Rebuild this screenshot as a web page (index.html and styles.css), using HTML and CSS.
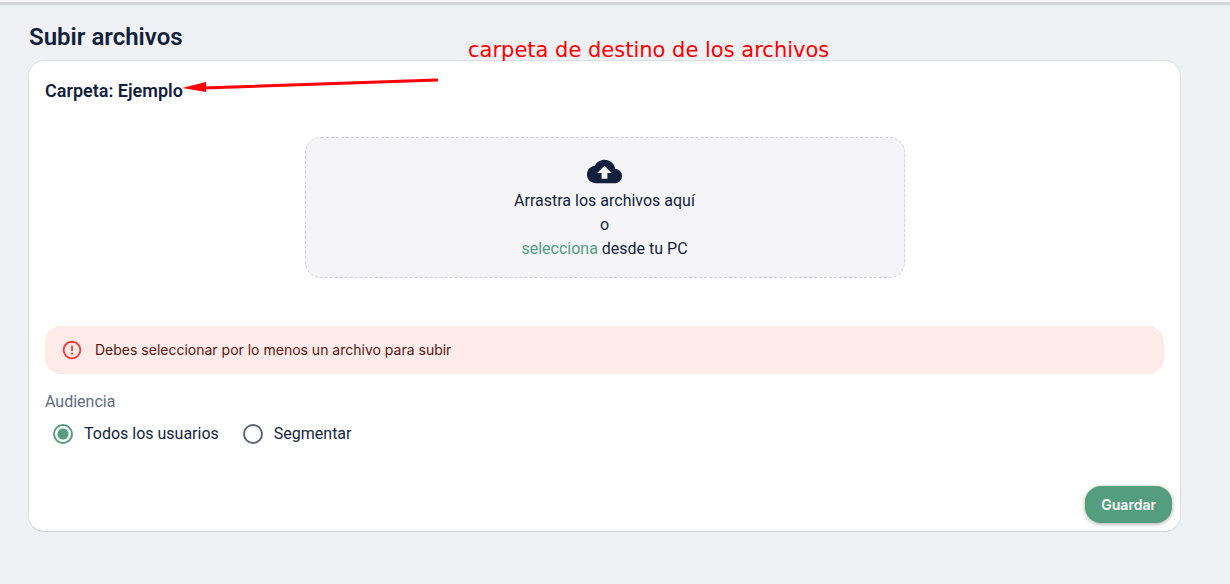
FILE: index.html
```html
<!DOCTYPE html>
<html lang="es">
<head>
    <meta charset="UTF-8">
    <meta name="viewport" content="width=device-width, initial-scale=1.0">
    <title>Subir archivos</title>
    <link rel="stylesheet" href="styles.css">
</head>
<body>
    <div class="topbar"></div>
    <main class="page">
        <h1>Subir archivos</h1>
        <form class="card">
            <h2>Carpeta: Ejemplo</h2>

            <div class="dropzone">
                <svg class="cloud" viewBox="0 0 24 24" aria-hidden="true">
                    <path d="M19.35 10.04C18.67 6.59 15.64 4 12 4 9.11 4 6.6 5.64 5.35 8.04 2.34 8.36 0 10.91 0 14c0 3.31 2.69 6 6 6h13c2.76 0 5-2.24 5-5 0-2.64-2.05-4.78-4.65-4.96zM14 13v4h-4v-4H7l5-5 5 5h-3z"/>
                </svg>
                <span>Arrastra los archivos aquí</span>
                <span>o</span>
                <span><a href="#">selecciona</a> desde tu PC</span>
            </div>

            <div class="alert" role="alert">
                <svg viewBox="0 0 24 24" aria-hidden="true">
                    <path d="M11 15h2v2h-2zm0-8h2v6h-2zm.99-5C6.47 2 2 6.48 2 12s4.47 10 9.99 10C17.52 22 22 17.52 22 12S17.52 2 11.99 2zM12 20c-4.42 0-8-3.58-8-8s3.58-8 8-8 8 3.58 8 8-3.58 8-8 8z"/>
                </svg>
                <span>Debes seleccionar por lo menos un archivo para subir</span>
            </div>

            <fieldset class="audience">
                <legend>Audiencia</legend>
                <div class="options">
                    <label><input type="radio" name="audiencia" value="todos" checked>Todos los usuarios</label>
                    <label><input type="radio" name="audiencia" value="segmentar">Segmentar</label>
                </div>
            </fieldset>

            <div class="actions">
                <button type="submit">Guardar</button>
            </div>
        </form>

        <!-- nota sobre la carpeta -->
        <p class="note">carpeta de destino de los archivos</p>
        <svg class="arrow" viewBox="0 0 256 20" aria-hidden="true">
            <path class="line" d="M22 12 L255 4"/>
            <path class="head" d="M0 12 L24 6 V16 Z"/>
        </svg>
    </main>
</body>
</html>
```

FILE: styles.css
```css
* {
    box-sizing: border-box;
}
body {
    margin: 0;
    font-family: Roboto, "Liberation Sans", sans-serif;
    font-size: 16px;
    line-height: 24px;
    color: #121f3d;
    background-color: #f0f1f5;
}
.topbar {
    height: 5px;
    background-color: #f7f7f7;
    border-bottom: 3px solid #d6d6d6;
}
.page {
    position: relative;
    padding: 16px 49px 48px 28px;
}
h1 {
    margin: 0 0 7px 1px;
    font-size: 24px;
    font-weight: 600;
    line-height: 32px;
}
.card {
    padding: 16px;
    background-color: #fff;
    border: 1px solid #dcdee3;
    border-bottom-color: #cfd1d5;
    border-radius: 16px;
}
h2 {
    margin: 0;
    font-size: 18px;
    font-weight: 600;
    line-height: 28px;
}
.dropzone {
    display: flex;
    flex-direction: column;
    align-items: center;
    width: 100%;
    max-width: 600px;
    margin: 32px auto 48px;
    padding: 16px;
    text-align: center;
    background-color: #f5f5f8;
    border: 1px dashed #cfd1d5;
    border-radius: 16px;
}
.dropzone a {
    color: #549d7f;
    text-decoration: none;
}
.cloud {
    width: 35px;
    height: 35px;
    fill: #121f3d;
}
.alert {
    display: flex;
    align-items: center;
    gap: 12px;
    padding: 12px 16px;
    font-family: Inter, "Liberation Sans", sans-serif;
    font-size: 14px;
    color: #5f1512;
    background-color: #fdeae9;
    border-radius: 16px;
}
.alert svg {
    width: 22px;
    height: 22px;
    fill: #f4403a;
}
.audience {
    margin: 16px 0 0;
    padding: 0;
    border: none;
}
.audience legend {
    padding: 0;
    color: #616b82;
}
.options {
    display: flex;
    gap: 24px;
    padding: 8px;
}
.options label {
    display: flex;
    align-items: center;
    gap: 11px;
}
.options input {
    appearance: none;
    width: 20px;
    height: 20px;
    margin: 0;
    border: 2px solid #5a657d;
    border-radius: 50%;
}
.options input:checked {
    border-color: #549d7f;
    background: radial-gradient(circle, #549d7f 5px, transparent 6px);
}
.actions {
    display: flex;
    justify-content: flex-end;
    margin: 32px -8px -8px 0;
}
button {
    padding: 6px 16px;
    font-family: Inter, "Liberation Sans", sans-serif;
    font-size: 14px;
    font-weight: 600;
    line-height: 25px;
    color: #fff;
    background-color: #549d7f;
    border: none;
    border-radius: 16px;
    box-shadow: 0 1px 4px rgba(0, 0, 0, 0.35);
}
.note {
    position: absolute;
    top: 33px;
    left: 468px;
    margin: 0;
    font-family: "DejaVu Sans", sans-serif;
    font-size: 21px;
    color: #f00;
}
.arrow {
    position: absolute;
    top: 71px;
    left: 182px;
    width: 256px;
    height: 20px;
}
.arrow .line {
    stroke: #f00;
    stroke-width: 3;
    stroke-linecap: round;
}
.arrow .head {
    fill: #f00;
}
```
